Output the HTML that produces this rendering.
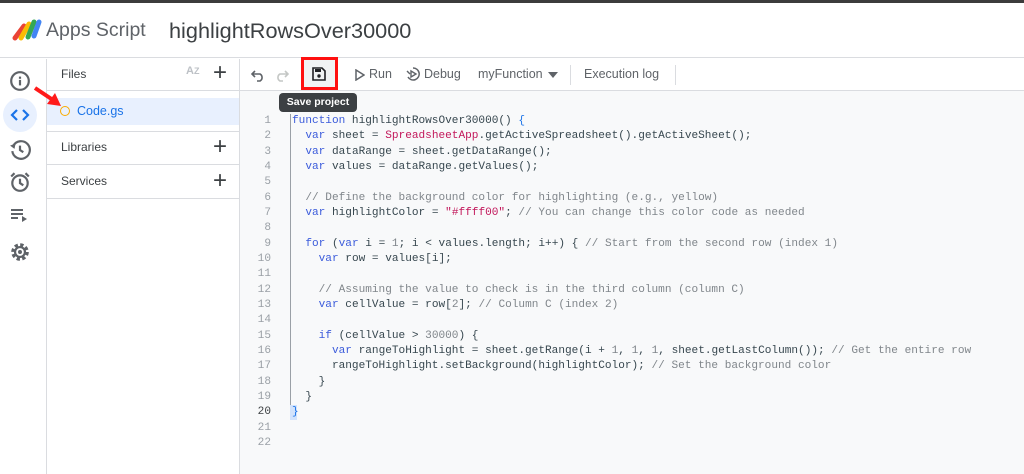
<!DOCTYPE html>
<html><head><meta charset="utf-8"><style>
*{margin:0;padding:0;box-sizing:border-box}
body{width:1024px;height:474px;overflow:hidden;background:#fff;font-family:"Liberation Sans",sans-serif;color:#3c4043;position:relative}
.abs{position:absolute}
.topline{left:0;top:0;width:1024px;height:3px;background:#3c3c3c}
.hdr{left:0;top:3px;width:1024px;height:55px;border-bottom:1px solid #dadce0}
.rail{left:0;top:59px;width:47px;height:415px;border-right:1px solid #dadce0}
.files{left:47px;top:59px;width:193px;height:415px;border-right:1px solid #dadce0}
.tb{left:240px;top:59px;width:784px;height:32px;border-bottom:1px solid #dadce0}
.ed{left:240px;top:91px;width:784px;height:383px;background:#f8f9fa}
.code{font-family:"Liberation Mono",monospace;font-size:11.1px;line-height:15.33px;white-space:pre;color:#37474f}
.k{color:#3b5bdb}.s{color:#c2185b}.c{color:#80868b}.n{color:#80868b}.p{color:#1a73e8}
.ln{color:#9aa0a6;text-align:right;width:31px}
.plus{font-size:24px;color:#3c4043;font-weight:normal}
</style></head><body>
<div class="abs topline"></div>
<div class="abs hdr">
 <svg class="abs" style="left:12px;top:15px" width="30" height="24" viewBox="0 0 30 24">
  <path d="M3 20 L12 8" stroke="#ea4335" stroke-width="5" stroke-linecap="round"/>
  <path d="M9 20 L17 6" stroke="#fbbc04" stroke-width="5" stroke-linecap="round"/>
  <path d="M16 19 L22 4" stroke="#34a853" stroke-width="5" stroke-linecap="round"/>
  <path d="M22 18 L27 4" stroke="#4285f4" stroke-width="5" stroke-linecap="round"/>
 </svg>
 <div class="abs" style="left:46px;top:16px;font-size:19.5px;color:#5f6368">Apps Script</div>
 <div class="abs" style="left:169px;top:15px;font-size:21.7px;color:#3c4043">highlightRowsOver30000</div>
</div>
<div class="abs rail">
 <svg class="abs" style="left:9px;top:11px" width="22" height="22" viewBox="0 0 20 20"><circle cx="10" cy="10" r="8" fill="none" stroke="#5f6368" stroke-width="2"/><rect x="9" y="9" width="2" height="5" fill="#5f6368"/><rect x="9" y="6" width="2" height="2" fill="#5f6368"/></svg>
 <div class="abs" style="left:3px;top:39px;width:34px;height:34px;border-radius:17px;background:#e8f0fe"></div>
 <svg class="abs" style="left:10px;top:47px" width="20" height="18" viewBox="0 0 20 18"><path d="M7 4 L2 9 L7 14 M13 4 L18 9 L13 14" fill="none" stroke="#1a73e8" stroke-width="2.2"/></svg>
 <svg class="abs" style="left:9px;top:80px" width="22" height="22" viewBox="0 0 20 20"><path d="M4 6 A8 8 0 1 1 3 11" fill="none" stroke="#5f6368" stroke-width="2"/><path d="M1 6 L5 9 L6 4Z" fill="#5f6368"/><path d="M10 6 V10 L13 12" fill="none" stroke="#5f6368" stroke-width="2"/></svg>
 <svg class="abs" style="left:9px;top:112px" width="22" height="22" viewBox="0 0 20 20"><circle cx="10" cy="11" r="7" fill="none" stroke="#5f6368" stroke-width="2"/><path d="M10 7 V11 L13 13 M2 5 L5 2 M18 5 L15 2" fill="none" stroke="#5f6368" stroke-width="2"/></svg>
 <svg class="abs" style="left:10px;top:148px" width="20" height="16" viewBox="0 0 20 16"><path d="M1 3 H13 M1 7 H13 M1 11 H8" stroke="#5f6368" stroke-width="2"/><path d="M12 9 L17 12 L12 15Z" fill="#5f6368"/></svg>
 <svg class="abs" style="left:9px;top:182px" width="22" height="22" viewBox="0 0 20 20"><circle cx="10" cy="10" r="6.5" fill="none" stroke="#5f6368" stroke-width="3" stroke-dasharray="3 2.1"/><circle cx="10" cy="10" r="4.5" fill="none" stroke="#5f6368" stroke-width="2"/><circle cx="10" cy="10" r="1.8" fill="#5f6368"/></svg>
</div>
<div class="abs files">
 <div class="abs" style="left:14px;top:8px;font-size:12px;color:#3c4043">Files</div>
 <div class="abs" style="left:139px;top:6px;font-size:11px;color:#bdc1c6;font-weight:bold">A<span style="font-size:9px">Z</span></div>
 <div class="abs plus" style="left:166px;top:0px">+</div>
 <div class="abs" style="left:0;top:31px;width:192px;height:1px;background:#dadce0"></div>
 <div class="abs" style="left:0;top:39px;width:192px;height:27px;background:#e8f0fe"></div>
 <div class="abs" style="left:13px;top:47px;width:10px;height:10px;border:1.5px solid #f9ab00;border-radius:50%"></div>
 <div class="abs" style="left:30px;top:45px;font-size:12.5px;color:#1a73e8">Code.gs</div>
 <div class="abs" style="left:0;top:72px;width:192px;height:1px;background:#dadce0"></div>
 <div class="abs" style="left:14px;top:81px;font-size:12px">Libraries</div>
 <div class="abs plus" style="left:166px;top:74px">+</div>
 <div class="abs" style="left:0;top:105px;width:192px;height:1px;background:#dadce0"></div>
 <div class="abs" style="left:14px;top:115px;font-size:12px">Services</div>
 <div class="abs plus" style="left:166px;top:108px">+</div>
 <div class="abs" style="left:0;top:139px;width:192px;height:1px;background:#dadce0"></div>
</div>
<svg class="abs" style="left:33px;top:86px" width="30" height="22" viewBox="0 0 30 22"><path d="M2 2 L20 14" stroke="#ff1a1a" stroke-width="4"/><path d="M14 18 L28 20 L22 7Z" fill="#ff1a1a"/></svg>
<div class="abs tb">
 <svg class="abs" style="left:11px;top:9px" width="14" height="14" viewBox="0 0 14 14"><path d="M4 3 L1 6 L4 9 M1 6 H9 A4 4 0 0 1 9 13 H6" fill="none" stroke="#5f6368" stroke-width="1.6"/></svg>
 <svg class="abs" style="left:35px;top:9px" width="14" height="14" viewBox="0 0 14 14"><path d="M10 3 L13 6 L10 9 M13 6 H5 A4 4 0 0 0 5 13 H8" fill="none" stroke="#c4c7c5" stroke-width="1.6"/></svg>
 <div class="abs" style="left:61px;top:-2px;width:37px;height:33px;border:3px solid #ff1010;background:#f1f3f4"></div>
 <svg class="abs" style="left:72px;top:8px" width="14" height="14" viewBox="0 0 14 14"><path d="M1 1 H10 L13 4 V13 H1Z" fill="none" stroke="#202124" stroke-width="1.6"/><rect x="3" y="2" width="6" height="3" fill="#202124"/><circle cx="7" cy="9" r="1.7" fill="#202124"/></svg>
 <svg class="abs" style="left:115px;top:10px" width="10" height="12" viewBox="0 0 10 12"><path d="M1 1 L9 6 L1 11Z" fill="none" stroke="#5f6368" stroke-width="1.5"/></svg>
 <div class="abs" style="left:129px;top:8px;font-size:12.5px;color:#5f6368">Run</div>
 <svg class="abs" style="left:166px;top:8px" width="14" height="14" viewBox="0 0 14 14"><path d="M7 1 A6 6 0 1 1 2 10" fill="none" stroke="#5f6368" stroke-width="1.5"/><path d="M5 4 L10 7 L5 10Z" fill="none" stroke="#5f6368" stroke-width="1.4"/><path d="M1 4 L4 7" stroke="#5f6368" stroke-width="1.4"/></svg>
 <div class="abs" style="left:184px;top:8px;font-size:12.5px;color:#5f6368">Debug</div>
 <div class="abs" style="left:238px;top:8px;font-size:12.5px;color:#5f6368">myFunction</div>
 <svg class="abs" style="left:308px;top:13px" width="10" height="6"><path d="M0 0 H10 L5 6Z" fill="#5f6368"/></svg>
 <div class="abs" style="left:330px;top:6px;width:1px;height:20px;background:#dadce0"></div>
 <div class="abs" style="left:344px;top:8px;font-size:12.5px;color:#5f6368">Execution log</div>
 <div class="abs" style="left:435px;top:6px;width:1px;height:20px;background:#dadce0"></div>
</div>
<div class="abs ed">
 <div class="abs" style="left:50px;top:23px;width:1px;height:298px;background:#9aa0a6"></div>
 <div class="abs" style="left:50px;top:314px;width:7px;height:15px;background:#d2e3fc"></div>
 <div class="abs code ln" style="left:0;top:23px">1
2
3
4
5
6
7
8
9
10
11
12
13
14
15
16
17
18
19
<span style="color:#3c4043">20</span>
21
22</div>
<div class="abs code" style="left:52px;top:23px"><span class="k">function</span> highlightRowsOver30000() <span class="p">{</span>
  <span class="k">var</span> sheet = <span class="s">SpreadsheetApp</span>.getActiveSpreadsheet().getActiveSheet();
  <span class="k">var</span> dataRange = sheet.getDataRange();
  <span class="k">var</span> values = dataRange.getValues();

  <span class="c">// Define the background color for highlighting (e.g., yellow)</span>
  <span class="k">var</span> highlightColor = <span class="s">"#ffff00"</span>; <span class="c">// You can change this color code as needed</span>

  <span class="k">for</span> (<span class="k">var</span> i = <span class="n">1</span>; i &lt; values.length; i++) { <span class="c">// Start from the second row (index 1)</span>
    <span class="k">var</span> row = values[i];

    <span class="c">// Assuming the value to check is in the third column (column C)</span>
    <span class="k">var</span> cellValue = row[<span class="n">2</span>]; <span class="c">// Column C (index 2)</span>

    <span class="k">if</span> (cellValue &gt; <span class="n">30000</span>) {
      <span class="k">var</span> rangeToHighlight = sheet.getRange(i + <span class="n">1</span>, <span class="n">1</span>, <span class="n">1</span>, sheet.getLastColumn()); <span class="c">// Get the entire row</span>
      rangeToHighlight.setBackground(highlightColor); <span class="c">// Set the background color</span>
    }
  }
<span class="p">}</span></div>
</div>
<div class="abs" style="left:279px;top:93px;width:78px;height:19px;background:#3c4043;border-radius:4px;color:#fff;font-size:10.5px;font-weight:bold;line-height:19px;text-align:center">Save project</div>
</body></html>
